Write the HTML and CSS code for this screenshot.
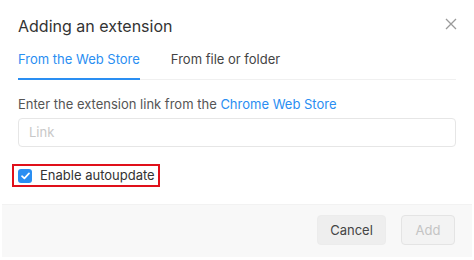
FILE: index.html
```html
<!DOCTYPE html>
<html>
<head>
<meta charset="utf-8">
<link rel="stylesheet" href="styles.css">
</head>
<body>
<div class="dialog">
  <div class="header">
    <h1 class="title">Adding an extension</h1>
    <button class="close" aria-label="Close">
      <svg width="12" height="12" viewBox="0 0 12 12"><path d="M1 1 L11 11 M11 1 L1 11" stroke="#9a9a9a" stroke-width="1.3" fill="none"/></svg>
    </button>
  </div>
  <div class="tabs">
    <div class="tab active">From the Web Store</div>
    <div class="tab">From file or folder</div>
  </div>
  <div class="body">
    <p class="hint">Enter the extension link from the <span class="link">Chrome Web Store</span></p>
    <div class="input">Link</div>
    <div class="checkrow">
      <span class="check">
        <svg width="9" height="8" viewBox="0 0 9 8"><path d="M1 4.2 L3.4 6.4 L8 1.4" stroke="#fff" stroke-width="1.7" fill="none" stroke-linecap="round" stroke-linejoin="round"/></svg>
      </span>
      <span class="checklabel">Enable autoupdate</span>
    </div>
  </div>
  <div class="footer">
    <button class="btn cancel">Cancel</button>
    <button class="btn add">Add</button>
  </div>
</div>
</body>
</html>
```
FILE: styles.css
```css
* { box-sizing: border-box; }
html, body { margin: 0; padding: 0; background: #fff; }
body { font-family: Inter, "Noto Sans", sans-serif; width: 474px; height: 260px; overflow: hidden; }
.dialog { display: flex; flex-direction: column; height: 260px; }
.header { display: flex; justify-content: space-between; align-items: flex-start; padding: 16px 16px 0 18px; }
.title { margin: 0; font-size: 16px; font-weight: 400; color: #333; line-height: 20px; }
.close { border: 0; background: none; padding: 0; margin-top: 1px; width: 14px; height: 14px; display: flex; align-items: center; justify-content: center; }
.tabs { display: flex; gap: 31px; margin: 12px 18px 0 18px; border-bottom: 1px solid #f0f0f0; }
.tab { font-size: 13px; color: #444; line-height: 17px; padding: 3px 0 10px; border-bottom: 2px solid transparent; margin-bottom: -1px; }
.tab.active { color: #2a8ef2; border-bottom-color: #2a8ef2; }
.body { padding: 16px 18px 0 18px; flex: 1; }
.hint { margin: 0; font-size: 13px; color: #555; line-height: 17px; }
.link { color: #2a8ef2; }
.input { margin-top: 5px; height: 29px; border: 1px solid #e6e6e6; border-radius: 4px; font-size: 13px; color: #c8c8c8; padding: 0 10px; line-height: 27px; }
.checkrow { display: inline-flex; align-items: center; gap: 8px; margin: 17px 0 0 -6px; padding: 2px 3px 2px 4px; border: 2px solid #e0101a; height: 23px; }
.check { width: 14px; height: 14px; border-radius: 3px; background: #2a8ef2; display: flex; align-items: center; justify-content: center; }
.checklabel { font-size: 13px; color: #333; line-height: 17px; }
.footer { margin: 0 2px 3px 2px; height: 53px; background: #f8f8f8; border-top: 1px solid #f2f2f2; display: flex; justify-content: flex-end; align-items: center; gap: 15px; padding: 0 17px 2px 0; }
.btn { font-family: Inter, "Noto Sans", sans-serif; font-size: 13px; height: 30px; border-radius: 4px; padding: 0; }
.cancel { width: 69px; background: #eeeeee; border: 1px solid #ececec; color: #444; }
.add { width: 54px; background: #f3f3f3; border: 1px solid #e4e4e4; color: #c4c4c4; }
```
